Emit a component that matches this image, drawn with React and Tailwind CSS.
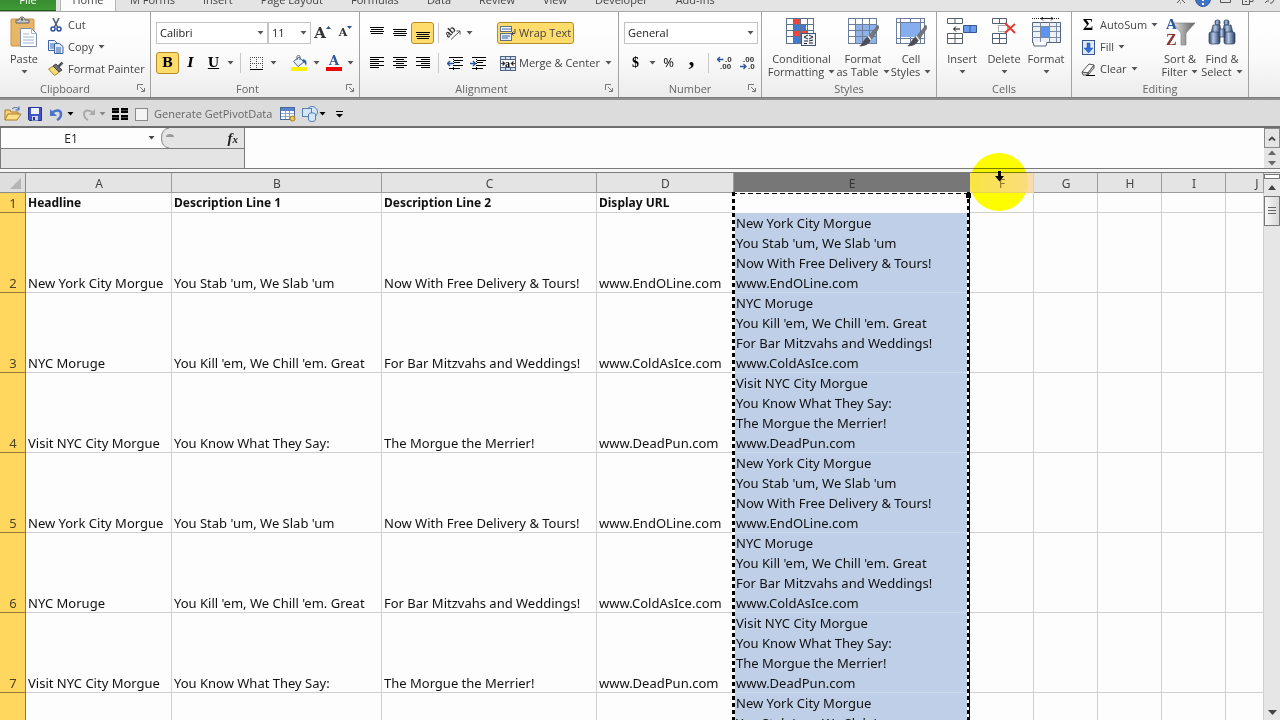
import { useState } from 'react';

const TABS = ['M Forms', 'Insert', 'Page Layout', 'Formulas', 'Data', 'Review', 'View', 'Developer', 'Add-Ins'];

const COLUMNS = [
    { id: 'A', width: 'w-[146px]' },
    { id: 'B', width: 'w-[210px]' },
    { id: 'C', width: 'w-[215px]' },
    { id: 'D', width: 'w-[137px]' },
    { id: 'E', width: 'w-[236px]' },
    { id: 'F', width: 'w-16' },
    { id: 'G', width: 'w-16' },
    { id: 'H', width: 'w-16' },
    { id: 'I', width: 'w-16' },
    { id: 'J', width: '' },
];

const ADS = [
    ['New York City Morgue', "You Stab 'um, We Slab 'um", 'Now With Free Delivery & Tours!', 'www.EndOLine.com'],
    ['NYC Moruge', "You Kill 'em, We Chill 'em. Great", 'For Bar Mitzvahs and Weddings!', 'www.ColdAsIce.com'],
    ['Visit NYC City Morgue', 'You Know What They Say:', 'The Morgue the Merrier!', 'www.DeadPun.com'],
];

const ROWS = [0, 1, 2, 0, 1, 2, 0].map((i) => ADS[i]);

/* ---------- small pieces ---------- */

function Arrow({ className = 'text-[#555]' }) {
    return (
        <svg width="7" height="4" viewBox="0 0 7 4" className={`shrink-0 ${className}`}>
            <path d="M0.5 0h6L3.5 3.5z" fill="currentColor" />
        </svg>
    );
}

function Divider() {
    return <div className="h-5 w-px bg-[#c9c9c9]" />;
}

function Launcher() {
    return (
        <button aria-label="More options" className="absolute right-1 bottom-1">
            <svg width="9" height="9" viewBox="0 0 9 9" fill="none" stroke="#777">
                <path d="M0.5 6V0.5H6M3 3l4 4M7.5 4v3.5H4" />
            </svg>
        </button>
    );
}

function Group({ title, className = '', launcher, children }) {
    return (
        <section className={`relative flex shrink-0 flex-col border-r border-[#a3a3a3] ${className}`}>
            <div className="h-[69px]">{children}</div>
            <h2 className="text-center text-[11px] leading-4 text-[#666]">{title}</h2>
            {launcher && <Launcher />}
        </section>
    );
}

function IconButton({ label, className = 'w-[23px]', active, children }) {
    return (
        <button
            aria-label={label}
            className={`flex h-[22px] shrink-0 items-center justify-center rounded-[3px] ${className} ${active ? 'border border-[#b58c2c] bg-[#ffdc6b]' : ''}`}
        >
            {children}
        </button>
    );
}

function SmallButton({ icon, label, arrow }) {
    return (
        <button className="flex h-[22px] items-center gap-1 whitespace-nowrap">
            <span className="flex w-4 justify-center">{icon}</span>
            <span>{label}</span>
            {arrow && <Arrow />}
        </button>
    );
}

function BigButton({ icon, lines, className }) {
    return (
        <button className={`flex shrink-0 flex-col items-center pt-1 leading-[13px] whitespace-nowrap ${className}`}>
            <span className="flex h-9 items-center pb-1">{icon}</span>
            <span>{lines[0]}</span>
            {lines[1] ? (
                <span className="flex items-center gap-1">
                    {lines[1]}
                    <Arrow />
                </span>
            ) : (
                <span className="flex h-[13px] items-center">
                    <Arrow />
                </span>
            )}
        </button>
    );
}

function Combo({ label, value, className }) {
    return (
        <div className={`relative shrink-0 ${className}`}>
            <select
                aria-label={label}
                defaultValue={value}
                className="h-[22px] w-full appearance-none border border-[#c4c4c4] bg-white px-[3px] text-[11px] text-[#222]"
            >
                <option>{value}</option>
            </select>
            <Arrow className="pointer-events-none absolute top-[9px] right-1 text-[#555]" />
        </div>
    );
}

/* ---------- ribbon icons ---------- */

const PasteIcon = () => (
    <svg width="28" height="32" viewBox="0 0 28 32">
        <rect x="1" y="3" width="23" height="27" rx="1" fill="#e9b566" stroke="#c8924a" />
        <path d="M6 7V4h3c0-4 6-4 6 0h4v3z" fill="#c5c8cc" stroke="#666" />
        <circle cx="12" cy="3.5" r="1.2" fill="#555" />
        <path d="M10.500 12.500h11l5 5v13h-16z" fill="#fff" stroke="#7c8ea8" />
        <path d="M21.500 12.500v5h5M13 18h6M13 21h11M13 24h11M13 27h11" fill="none" stroke="#9fb4d3" />
    </svg>
);

const CutIcon = () => (
    <svg width="12" height="14" viewBox="0 0 12 14" fill="none">
        <path d="M3 0l4.500 9M9 0L4.500 9" stroke="#51606f" strokeWidth="1.600" />
        <circle cx="3" cy="11" r="2" stroke="#28509c" strokeWidth="1.500" />
        <circle cx="9" cy="11" r="2" stroke="#28509c" strokeWidth="1.500" />
    </svg>
);

const CopyIcon = () => (
    <svg width="16" height="14" viewBox="0 0 16 14" stroke="#3b62a4">
        <path d="M0.500 0.500h6l3 3v7h-9z" fill="#eaf2fd" />
        <path d="M2 4h4M2 6h5M2 8h5" />
        <path d="M6.500 3.500h5l3.500 3v7H6.500z" fill="#dce9fa" />
        <path d="M8 8h5M8 10h5M8 12h5" />
    </svg>
);

const PainterIcon = () => (
    <svg width="16" height="14" viewBox="0 0 16 14">
        <path d="M0.500 7l5-3 6 6-5 3.500z" fill="#f3dc74" stroke="#a8862e" />
        <path d="M5 4l3-2 6 6-3 2z" fill="#71717a" stroke="#444" />
        <path d="M10 5l4.500-4.500" stroke="#50565e" strokeWidth="2.500" />
    </svg>
);

const BordersIcon = () => (
    <svg width="13" height="13" viewBox="0 0 13 13" stroke="#444">
        <path d="M0 0.500h13M0 6.500h13M0.500 0v12M6.500 0v12M12.500 0v12" strokeDasharray="1 1" />
        <path d="M0 12.500h13" stroke="#000" />
    </svg>
);

const FillColorIcon = () => (
    <svg width="17" height="16" viewBox="0 0 17 16">
        <path d="M2.500 6.500L8 2l5 5-6 4.500z" fill="#e6edf5" stroke="#52687f" />
        <path d="M6 5V1.500c0-1.500 3-1.500 3 0V5" fill="none" stroke="#52687f" />
        <path d="M12 4c4 1 4 4 3 7-1-3-2-4-4-5z" fill="#2f62ad" />
        <rect y="12" width="16" height="4" fill="#fff200" />
    </svg>
);

function AlignIcon({ rows, top = 0 }) {
    return (
        <svg width="14" height="14" viewBox="0 0 14 14" stroke="#000">
            {rows.map(([x, w], i) => (
                <path key={i} d={`M${x} ${top + i * 2 + 0.5}h${w}`} />
            ))}
        </svg>
    );
}

const THREE = [[0, 14], [1, 12], [0, 14], [1, 12]];
const LEFT = [[0, 14], [0, 9], [0, 14], [0, 9], [0, 14], [0, 9]];
const CENTER = [[0, 14], [3, 8], [0, 14], [3, 8], [0, 14], [3, 8]];
const RIGHT = [[0, 14], [5, 9], [0, 14], [5, 9], [0, 14], [5, 9]];

const OrientationIcon = () => (
    <svg width="16" height="14" viewBox="0 0 16 14">
        <text x="0" y="9" fontSize="10" fontWeight="bold" fontFamily="Liberation Sans, sans-serif" fill="#333" transform="rotate(-45 5 8)">ab</text>
        <path d="M5 13.500l9-8.500M10.500 5H14v3.500" fill="none" stroke="#555" />
    </svg>
);

function IndentIcon({ out }) {
    return (
        <svg width="16" height="13" viewBox="0 0 16 13" fill="none" stroke="#000">
            <path d="M2 0.500h14M7 3.500h9M7 5.500h6M7 8.500h9M2 11.500h11" />
            <path d="M6.500 0v13" strokeDasharray="1 1" />
            <path d={out ? 'M6 6.500H1M3 4L0.500 6.500L3 9' : 'M0 6.500h5M3 4l2.500 2.500L3 9'} stroke="#2c56a0" strokeWidth="1.300" />
        </svg>
    );
}

const WrapIcon = () => (
    <svg width="16" height="15" viewBox="0 0 16 15" fill="none">
        <rect x="0.500" y="0.500" width="11" height="5" fill="#fff" stroke="#5f6f86" />
        <rect x="0.500" y="7.500" width="11" height="7" fill="#e4edf9" stroke="#5f6f86" />
        <path d="M2 3h10M2 10h8M2 12h6" stroke="#3f62a5" />
        <path d="M15 3v4.500h-3M13.500 5.500l-2 2 2 2" stroke="#444" />
    </svg>
);

const MergeIcon = () => (
    <svg width="16" height="15" viewBox="0 0 16 15">
        <rect x="0.500" y="0.500" width="15" height="14" fill="#cfdff5" stroke="#4f6381" />
        <path d="M5.500 0v4M10.500 0v4M5.500 11v4M10.500 11v4M0 3.500h16M0 11.500h16" stroke="#4f6381" />
        <rect x="1" y="4" width="14" height="7" fill="#fff" />
        <path d="M1 7.500h4M11 7.500h4M3 5.500v4L5 7.500zM13 5.500v4L11 7.500z" stroke="#333" strokeWidth="0.800" />
        <text x="5" y="10.500" fontSize="10" fontWeight="bold" fontFamily="Liberation Serif, serif" fill="#000">a</text>
    </svg>
);

function DecimalIcon({ more }) {
    return (
        <svg width="17" height="14" viewBox="0 0 17 14" fontFamily="Liberation Sans, sans-serif" fontSize="8" fontWeight="bold" fill="#333">
            <text x={more ? 8 : 3} y="6">{more ? '.0' : '.00'}</text>
            <text x={more ? 3 : 8} y="13">{more ? '.00' : '.0'}</text>
            <path d={more ? 'M6.500 3.500H1M3 1L0.500 3.500L3 6' : 'M0 10.500h5.500M3.500 8L6 10.500 3.500 13'} fill="none" stroke="#2c56a0" strokeWidth="1.300" />
        </svg>
    );
}

const Brush = () => (
    <g>
        <path d="M30 7L20 19l3 3L31 10z" fill="#777" stroke="#555" strokeWidth="0.500" />
        <path d="M20 18l-3 3c-2 2-3 6-6 7 5 1 9-1 12-6z" fill="#4c4c55" />
        <path d="M20 18l3 4" stroke="#ddd" strokeWidth="1.500" />
    </g>
);

const ConditionalIcon = () => (
    <svg width="31" height="29" viewBox="0 0 31 29">
        <path d="M0.500 0.500h28v25h-28z" fill="#fff" />
        <path d="M8 0h6v7H8z" fill="#e8483f" />
        <path d="M8 7h12v6H8z" fill="#3f7bd0" />
        <path d="M8 13h14v6H8z" fill="#e8483f" />
        <path d="M8 19h7v6H8z" fill="#3f7bd0" />
        <path d="M0 0.500h28M0 6.500h28M0 12.500h28M0 18.500h28M0 25.500h28M0.500 0v26M7.500 0v26M14.500 0v26M21.500 0v26M27.500 0v26" stroke="#5d7290" />
        <rect x="15.500" y="15.500" width="14" height="12" fill="#eef3fb" stroke="#44546d" />
        <path d="M22 17l-4 2 4 2M18 23h4M23 17l4 2-4 2M23 23l4-1M23 25h4M18 25.500h3" fill="none" stroke="#222" />
    </svg>
);

const FormatTableIcon = () => (
    <svg width="31" height="29" viewBox="0 0 31 29">
        <path d="M0.500 0.500h28v25h-28z" fill="#fff" />
        <path d="M7 7h22v19H7z" fill="#8fb2ea" />
        <path d="M0 0.500h29M0 6.500h29M0 12.500h29M0 18.500h29M0 25.500h29M0.500 0v26M7.500 0v26M14.500 0v26M21.500 0v26M28.500 0v26" stroke="#6b7f9c" />
        <Brush />
    </svg>
);

const CellStylesIcon = () => (
    <svg width="31" height="29" viewBox="0 0 31 29">
        <path d="M0.500 0.500h28v25h-28z" fill="#fff" />
        <path d="M0 0.500h29M0 4.500h29M0 20.500h29M0 25.500h29M0.500 0v26M4.500 0v26M14.500 0v26M24.500 0v26M28.500 0v26" stroke="#6b7f9c" />
        <path d="M5 5h19v14H5z" fill="#86adee" />
        <Brush />
    </svg>
);

const InsertIcon = () => (
    <svg width="31" height="28" viewBox="0 0 31 28" fill="#fff" stroke="#555f6e">
        <path d="M0.500 0.500h15v5h-15zM8 0v6" />
        <path d="M0.500 15.500h15v10h-15zM8 15v11M0 20.500h16" />
        <path d="M16.500 7.500h13v7h-13z" fill="#6a9bec" stroke="#37568f" />
        <path d="M23 7v8" stroke="#37568f" />
        <path d="M13 11H7M9 8.500L6.500 11L9 13.500" fill="none" stroke="#000" />
    </svg>
);

const DeleteIcon = () => (
    <svg width="25" height="28" viewBox="0 0 25 28" fill="#fff" stroke="#555f6e">
        <path d="M0.500 0.500h14v5h-14zM7.500 0v6" />
        <path d="M0.500 15.500h14v10h-14zM7.500 15v11M0 20.500h15" />
        <path d="M6.500 7.500h9v6h-9z" strokeDasharray="1 1" />
        <path d="M13 5l10 10M23 6L13 15" stroke="#e5352c" strokeWidth="1.800" />
    </svg>
);

const FormatIcon = () => (
    <svg width="31" height="30" viewBox="0 0 31 30" fill="#fff" stroke="#55647c">
        <path d="M1 1.500h28" stroke="#222" strokeDasharray="1 1" />
        <path d="M10 1.500h12M12 0l-2 1.500 2 2M20 0l2 1.500-2 2" fill="none" stroke="#222" />
        <path d="M1.500 5.500h28v20h-28z" fill="#edf1f7" />
        <path d="M10 10h8v11h-8z" fill="#5c94ef" stroke="none" />
        <path d="M1 9.500h28M1 14.500h8M19 14.500h10M1 20.500h28M9.500 5v20M18.500 5v20M25.500 5v20" fill="none" stroke="#7b8ba4" />
        <path d="M2 25l1 4h12l1-4" />
    </svg>
);

const FillDownIcon = () => (
    <svg width="13" height="15" viewBox="0 0 13 15">
        <rect x="0.500" y="0.500" width="12" height="14" fill="#dfeafb" stroke="#3a5690" />
        <path d="M5 3h3v5h3l-4.500 5L2 8h3z" fill="#2f6fdc" stroke="#234f9f" strokeWidth="0.500" />
    </svg>
);

const EraserIcon = () => (
    <svg width="15" height="13" viewBox="0 0 15 13" stroke="#555">
        <path d="M1 9l7-8 5 1-6 8z" fill="#fff" />
        <path d="M1 9l6 1v2H2zM7 10l6-8v3l-6 7z" fill="#ddd" />
        <path d="M5 12.500h9" stroke="#000" />
    </svg>
);

const SortIcon = () => (
    <svg width="30" height="30" viewBox="0 0 30 30" fontFamily="Liberation Serif, serif" fontWeight="bold">
        <defs>
            <linearGradient id="funnel">
                <stop offset="0" stopColor="#e3e3e3" />
                <stop offset="1" stopColor="#5f5f5f" />
            </linearGradient>
        </defs>
        <path d="M8 6h22l-9 10v12h-5V16z" fill="url(#funnel)" stroke="#777" strokeWidth="0.600" />
        <text x="1" y="12" fontSize="15" fill="#2b579c">A</text>
        <text x="1" y="28" fontSize="16" fill="#8a3730">Z</text>
    </svg>
);

const FindIcon = () => (
    <svg width="28" height="28" viewBox="0 0 28 28">
        <defs>
            <linearGradient id="lens">
                <stop offset="0" stopColor="#32486c" />
                <stop offset="0.400" stopColor="#b5c7e4" />
                <stop offset="1" stopColor="#273c60" />
            </linearGradient>
        </defs>
        <g fill="url(#lens)" stroke="#2a3f63" strokeWidth="0.700">
            <rect x="7" y="2" width="5" height="5" rx="2" />
            <rect x="16" y="2" width="5" height="5" rx="2" />
            <path d="M5 7h7l1 8H3z" />
            <path d="M16 7h7l2 8H15z" />
            <rect x="1" y="14" width="11" height="12" rx="2" />
            <rect x="16" y="14" width="11" height="12" rx="2" />
            <rect x="11" y="11" width="6" height="8" />
        </g>
    </svg>
);

/* ---------- ribbon ---------- */

function TabStrip() {
    return (
        <nav className="flex h-3 items-end overflow-hidden border-b border-[#a9a9a9] bg-[#e4e4e4]">
            <button className="h-6 w-14 shrink-0 border-b border-[#1d5a1b] bg-gradient-to-b from-[#2c7a27] to-[#3f9a35] pt-[2px] leading-4 text-white">File</button>
            <button className="ml-1 h-6 w-14 shrink-0 border-x border-[#b4b4b4] bg-[#fcfcfc] pt-[2px] leading-4">Home</button>
            {TABS.map((tab) => (
                <button key={tab} className="h-6 shrink-0 px-[14px] pt-[2px] leading-4">
                    {tab}
                </button>
            ))}
            <svg width="104" height="11" viewBox="0 0 104 11" className="ml-auto shrink-0 self-start" fill="none" stroke="#555">
                <path d="M1 3l3-3M4 3h1M6 0l3 3" />
                <circle cx="27" cy="-1" r="7.500" fill="#3f73c4" stroke="#305b9f" />
                <path d="M27 0v1M27 3v2" stroke="#fff" strokeWidth="2" />
                <path d="M44.500 0v2.500h10V0M66.500 0v4.500h7V0M74 1.500h3V0M69 1.500h2M89 3l2-2h2M94 3h2l2-3" />
            </svg>
        </nav>
    );
}

function Ribbon() {
    return (
        <div className="flex overflow-hidden bg-gradient-to-b from-white via-[#fbfbfb] to-[#ececec]">
            <Group title="Clipboard" className="w-[151px] pr-5" launcher>
                <div className="flex">
                    <BigButton icon={<PasteIcon />} lines={['Paste']} className="w-12" />
                    <div className="pt-[2px]">
                        <SmallButton icon={<CutIcon />} label="Cut" />
                        <SmallButton icon={<CopyIcon />} label="Copy" arrow />
                        <SmallButton icon={<PainterIcon />} label="Format Painter" />
                    </div>
                </div>
            </Group>

            <Group title="Font" className="w-[209px] pr-5 pl-[5px]" launcher>
                <div className="flex pt-[10px]">
                    <Combo label="Font" value="Calibri" className="w-28" />
                    <Combo label="Font size" value="11" className="w-[43px]" />
                    <IconButton label="Increase font size">
                        <b className="font-[family-name:'DejaVu_Serif',serif] text-[15px] leading-4 text-[#333]">A</b>
                        <svg width="5" height="3" viewBox="0 0 5 3" className="mb-3 shrink-0"><path d="M0 3h5L2.500 0z" fill="#2c4f8f" /></svg>
                    </IconButton>
                    <IconButton label="Decrease font size">
                        <b className="font-[family-name:'DejaVu_Serif',serif] text-[11px] leading-4 text-[#333]">A</b>
                        <svg width="5" height="3" viewBox="0 0 5 3" className="mb-3 shrink-0"><path d="M0 0h5L2.500 3z" fill="#2c4f8f" /></svg>
                    </IconButton>
                </div>
                <div className="mt-2 flex items-center font-[family-name:'DejaVu_Serif',serif] text-[13px] text-black">
                    <IconButton label="Bold" active><b>B</b></IconButton>
                    <IconButton label="Italic"><b className="italic">I</b></IconButton>
                    <IconButton label="Underline"><b className="underline">U</b></IconButton>
                    <IconButton label="Underline style" className="w-[10px]"><Arrow /></IconButton>
                    <div className="px-[5px]"><Divider /></div>
                    <IconButton label="Borders" className="ml-1"><BordersIcon /></IconButton>
                    <IconButton label="Border style" className="w-5"><Arrow /></IconButton>
                    <Divider />
                    <IconButton label="Fill color" className="ml-2"><FillColorIcon /></IconButton>
                    <IconButton label="Fill colors" className="w-4"><Arrow /></IconButton>
                    <IconButton label="Font color" className="w-5">
                        <span className="flex w-4 justify-center border-b-4 border-[#f00000] leading-3 font-bold text-[#2f5597]">A</span>
                    </IconButton>
                    <IconButton label="Font colors" className="w-3"><Arrow /></IconButton>
                </div>
            </Group>

            <Group title="Alignment" className="w-[259px] pr-5 pl-[5px]" launcher>
                <div className="flex pt-[10px]">
                    <div>
                        <div className="flex items-center">
                            <IconButton label="Top align"><AlignIcon rows={THREE} top={1} /></IconButton>
                            <IconButton label="Middle align"><AlignIcon rows={THREE} top={3} /></IconButton>
                            <IconButton label="Bottom align" active><AlignIcon rows={THREE} top={6} /></IconButton>
                            <div className="px-1"><Divider /></div>
                            <IconButton label="Orientation" className="w-8"><OrientationIcon /><Arrow className="ml-1 text-[#555]" /></IconButton>
                        </div>
                        <div className="mt-2 flex items-center">
                            <IconButton label="Align left"><AlignIcon rows={LEFT} top={1} /></IconButton>
                            <IconButton label="Center"><AlignIcon rows={CENTER} top={1} /></IconButton>
                            <IconButton label="Align right"><AlignIcon rows={RIGHT} top={1} /></IconButton>
                            <div className="px-1"><Divider /></div>
                            <IconButton label="Decrease indent"><IndentIcon out /></IconButton>
                            <IconButton label="Increase indent"><IndentIcon /></IconButton>
                        </div>
                    </div>
                    <div className="mr-1 ml-1 w-px bg-[#c9c9c9]" />
                    <div>
                        <button className="flex h-[22px] items-center gap-[3px] rounded-[3px] border border-[#b58c2c] bg-[#ffdc6b] px-[2px] whitespace-nowrap">
                            <WrapIcon />
                            Wrap Text
                        </button>
                        <button className="mt-2 ml-[3px] flex h-[22px] items-center gap-[3px] whitespace-nowrap">
                            <MergeIcon />
                            Merge &amp; Center
                            <Arrow className="ml-[2px] text-[#555]" />
                        </button>
                    </div>
                </div>
            </Group>

            <Group title="Number" className="w-[143px] px-[5px]" launcher>
                <div className="pt-[10px]">
                    <Combo label="Number format" value="General" className="w-[134px]" />
                </div>
                <div className="mt-2 flex items-center">
                    <IconButton label="Accounting format"><b className="font-[family-name:'Liberation_Serif',serif] text-sm text-black">$</b></IconButton>
                    <IconButton label="Accounting formats" className="w-[10px]"><Arrow /></IconButton>
                    <IconButton label="Percent style"><span className="text-[13px] text-black">%</span></IconButton>
                    <IconButton label="Comma style"><b className="pb-3 font-[family-name:'Liberation_Serif',serif] text-2xl leading-3 text-black">,</b></IconButton>
                    <div className="px-[5px]"><Divider /></div>
                    <IconButton label="Increase decimal"><DecimalIcon more /></IconButton>
                    <IconButton label="Decrease decimal"><DecimalIcon /></IconButton>
                </div>
            </Group>

            <Group title="Styles" className="w-[175px]">
                <div className="flex pl-[6px]">
                    <BigButton icon={<ConditionalIcon />} lines={['Conditional', 'Formatting']} className="w-[67px]" />
                    <BigButton icon={<FormatTableIcon />} lines={['Format', 'as Table']} className="w-14" />
                    <BigButton icon={<CellStylesIcon />} lines={['Cell', 'Styles']} className="w-10" />
                </div>
            </Group>

            <Group title="Cells" className="w-[135px]">
                <div className="flex pl-1">
                    <BigButton icon={<InsertIcon />} lines={['Insert']} className="w-[42px]" />
                    <BigButton icon={<DeleteIcon />} lines={['Delete']} className="w-[42px]" />
                    <BigButton icon={<FormatIcon />} lines={['Format']} className="w-[42px]" />
                </div>
            </Group>

            <Group title="Editing" className="w-[177px]">
                <div className="flex pl-2">
                    <div className="w-[79px] pt-[2px]">
                        <SmallButton icon={<b className="font-[family-name:'Liberation_Serif',serif] text-base leading-4 text-black">Σ</b>} label="AutoSum" arrow />
                        <SmallButton icon={<FillDownIcon />} label="Fill" arrow />
                        <SmallButton icon={<EraserIcon />} label="Clear" arrow />
                    </div>
                    <BigButton icon={<SortIcon />} lines={['Sort &', 'Filter']} className="w-[42px]" />
                    <BigButton icon={<FindIcon />} lines={['Find &', 'Select']} className="w-[42px]" />
                </div>
            </Group>
        </div>
    );
}

function QuickAccess() {
    const [pivot, setPivot] = useState(false);

    return (
        <div className="flex h-[30px] items-center border-t-2 border-b-2 border-t-[#909090] border-b-[#6e6e6e] bg-[#dcdcdc] px-1 pt-[2px]">
            <button aria-label="Open" className="w-[22px]">
                <svg width="18" height="16" viewBox="0 0 18 16">
                    <path d="M1 14V4h5l1 2h7v3" fill="#f5d27a" stroke="#a77a24" />
                    <path d="M1 14l3-6h13l-4 6z" fill="#ffe08a" stroke="#a77a24" />
                    <path d="M8 3c2-2 5-2 7 0M15 0.500V4h-3.500" fill="none" stroke="#3a62a8" />
                </svg>
            </button>
            <button aria-label="Save" className="ml-[2px] w-[22px]">
                <svg width="14" height="14" viewBox="0 0 14 14">
                    <path d="M0.500 0.500h13v13h-12l-1-1z" fill="#4254c6" stroke="#27348d" />
                    <rect x="3" y="1" width="8" height="6" fill="#eef2fb" />
                    <rect x="4" y="9" width="6" height="4.500" fill="#cfd6e6" />
                    <rect x="5" y="10" width="2" height="3" fill="#27348d" />
                </svg>
            </button>
            <button aria-label="Undo" className="flex w-7 items-center gap-1">
                <svg width="13" height="13" viewBox="0 0 13 13" fill="none">
                    <path d="M2 5c4-4 9-3 9 1 0 3-2 5-4 6" stroke="#4a74c9" strokeWidth="2.500" />
                    <path d="M0 1v7h7z" fill="#4a74c9" />
                </svg>
                <Arrow className="text-black" />
            </button>
            <button aria-label="Redo" className="flex w-[34px] items-center gap-1 pl-1">
                <svg width="13" height="13" viewBox="0 0 13 13" fill="none" className="shrink-0">
                    <path d="M11 5C7 1 2 2 2 6c0 3 2 5 4 6" stroke="#a9a9a9" strokeWidth="2" />
                    <path d="M13 1v6H7z" fill="#a9a9a9" />
                </svg>
                <Arrow className="text-[#888]" />
            </button>
            <button aria-label="Freeze panes" className="mr-[3px] w-5">
                <svg width="16" height="12" viewBox="0 0 16 12">
                    <path d="M0 0h7v5H0zM9 0h7v5H9zM0 7h7v5H0zM9 7h7v5H9z" fill="#000" />
                    <path d="M0 2.500h7M9 2.500h7M0 9.500h7M9 9.500h7" stroke="#777" strokeWidth="0.600" />
                </svg>
            </button>
            <label className="flex items-center gap-[6px] whitespace-nowrap text-[#666]">
                <input
                    type="checkbox"
                    checked={pivot}
                    onChange={() => setPivot(!pivot)}
                    className="h-[13px] w-[13px] appearance-none border border-[#8a8a8a] bg-[#f4f4f4] checked:bg-[#666]"
                />
                Generate GetPivotData
            </label>
            <button aria-label="Table" className="ml-2 w-[22px]">
                <svg width="16" height="15" viewBox="0 0 16 15">
                    <rect x="0.500" y="0.500" width="14" height="12" fill="#fff" stroke="#4a6796" />
                    <path d="M1 1h13v3H1z" fill="#5585cf" />
                    <path d="M1 6.500h13M1 9.500h13M5.500 4v8M9.500 4v8" stroke="#8aa5cf" />
                    <circle cx="12.500" cy="11.500" r="2.500" fill="#f0c95c" stroke="#a17d22" />
                </svg>
            </button>
            <button aria-label="Shapes" className="flex w-[34px] items-center">
                <svg width="17" height="16" viewBox="0 0 17 16" fill="#d5e6f8" stroke="#5580b5">
                    <circle cx="10" cy="6" r="5.500" />
                    <rect x="0.500" y="2.500" width="9" height="8" />
                    <path d="M6.500 8v6c1 2 6 2 7 0V8c-1-1.500-6-1.500-7 0z" />
                </svg>
                <Arrow className="text-black" />
            </button>
            <button aria-label="Customize toolbar">
                <svg width="7" height="7" viewBox="0 0 7 7"><path d="M0 0h7v1H0zM0 3h7L3.500 6.500z" fill="#000" /></svg>
            </button>
        </div>
    );
}

function FormulaBar() {
    return (
        <div className="flex h-[41px] border-b border-[#7b7b7b]">
            <div className="w-[245px] shrink-0 border-x border-[#7b7b7b] bg-[#e4e4e4]">
                <div className="flex h-[21px] items-center border-b border-[#7b7b7b]">
                    <input
                        aria-label="Name box"
                        defaultValue="E1"
                        className="h-5 w-[140px] bg-[#fdfdfd] text-center text-[12px] text-[#222]"
                    />
                    <span className="flex h-5 w-5 items-center justify-center bg-[#fdfdfd]"><Arrow className="text-[#444]" /></span>
                    <svg width="16" height="20" viewBox="0 0 16 20" className="shrink-0">
                        <path d="M0 0h8Q0 1 0 10t8 10H0z" fill="#fdfdfd" />
                        <path d="M8 0Q0.500 1 0.500 10T8 20" fill="none" stroke="#8a8a8a" />
                        <path d="M5 9c0-4 8-4 8 0z" fill="#9a9a9a" />
                    </svg>
                    <button aria-label="Insert function" className="ml-auto pr-[6px] font-[family-name:'Liberation_Serif',serif] text-[15px] leading-5 font-bold text-[#222] italic">
                        f<span className="text-[11px]">x</span>
                    </button>
                </div>
            </div>
            <input aria-label="Formula" className="min-w-0 flex-1 bg-[#fdfdfd] px-1" />
            <div className="w-4 shrink-0 bg-[#e4e4e4]">
                <button aria-label="Expand formula bar" className="flex h-5 w-full items-center justify-center border border-[#8a8a8a]">
                    <svg width="8" height="5" viewBox="0 0 8 5"><path d="M1 4.500l3-3 3 3" fill="none" stroke="#444" strokeWidth="1.800" /></svg>
                </button>
                <svg width="16" height="18" viewBox="0 0 16 18">
                    <path d="M4 7h8L8 2.500zM4 13h8l-4 4.500z" fill="#666" />
                </svg>
            </div>
        </div>
    );
}

/* ---------- sheet ---------- */

function MarchingAnts() {
    return (
        <svg className="pointer-events-none absolute -top-px -left-[2px] z-10 h-[2000px] w-[239px]">
            <path d="M0 1H239" stroke="#fff" strokeWidth="2" />
            <path d="M0 1.500H239" stroke="#000" strokeDasharray="5 3" />
            <path d="M1.500 0V2000M236.500 0V2000" stroke="#fff" strokeWidth="3" />
            <path d="M1.500 0V2000M236.500 0V2000" stroke="#000" strokeWidth="3" strokeDasharray="4 3" />
            <path d="M237.500 0V2000" stroke="#000" />
            <rect x="234" y="1" width="5" height="5" fill="#000" />
        </svg>
    );
}

function Pointer() {
    return (
        <>
            <div className="pointer-events-none absolute -top-5 left-0 z-10 h-[58px] w-[58px] rounded-full bg-[#ffff00] mix-blend-multiply" />
            <div className="absolute inset-0 z-10 bg-gradient-to-r from-[#ffe64d] to-[#ffd9a0] opacity-80" />
            <svg width="9" height="11" viewBox="0 0 9 11" className="absolute -top-[2px] left-[25px] z-20">
                <path d="M3 0h3v5h3L4.500 10.500 0 5h3z" fill="#000" />
            </svg>
        </>
    );
}

function Sheet() {
    const cell = 'whitespace-nowrap px-[2px] py-0 align-bottom leading-5 shadow-[inset_-1px_-1px_0_#d0d0d0]';
    const rowHead = 'p-0 text-center align-bottom font-normal leading-5 text-[#4d4420] bg-[#ffd75e] shadow-[inset_-1px_-1px_0_#8f7a3c]';

    return (
        <table className="w-full table-fixed border-separate border-spacing-0 bg-[#fdfdfd] font-[family-name:'Noto_Sans',sans-serif] text-[13px] text-[#111]">
            <colgroup>
                <col className="w-[26px]" />
                {COLUMNS.map((c) => (
                    <col key={c.id} className={c.width} />
                ))}
            </colgroup>
            <thead>
                <tr className="h-5 text-[12px] text-[#444]">
                    <th className="bg-[#dedede] p-0 shadow-[inset_-1px_-1px_0_#8c8c8c]">
                        <svg width="20" height="18" viewBox="0 0 20 18" className="ml-1"><path d="M17 4v11H6z" fill="#b5b5b5" /></svg>
                    </th>
                    {COLUMNS.map(({ id }) => (
                        <th
                            key={id}
                            className={`relative px-0 pt-[2px] pb-0 text-center leading-[18px] font-normal ${id === 'E' ? 'bg-[#777] text-[#333]' : 'bg-[#e4e4e4] shadow-[inset_-1px_-1px_0_#9c9c9c]'}`}
                        >
                            {id === 'F' && <Pointer />}
                            <span className={id === 'F' ? 'relative z-10 text-[#8a7430]' : id === 'J' ? 'pl-6' : ''}>{id}</span>
                        </th>
                    ))}
                </tr>
            </thead>
            <tbody>
                <tr className="h-5 text-xs font-bold">
                    <th className={`${rowHead} text-[13px]`}>1</th>
                    <td className={cell}>Headline</td>
                    <td className={cell}>Description Line 1</td>
                    <td className={cell}>Description Line 2</td>
                    <td className={cell}>Display URL</td>
                    <td className="relative p-0">
                        <MarchingAnts />
                    </td>
                    {COLUMNS.slice(5).map((c) => (
                        <td key={c.id} className={cell} />
                    ))}
                </tr>
                {ROWS.map((ad, i) => (
                    <tr key={i} className="h-20">
                        <th className={rowHead}>{i + 2}</th>
                        {ad.map((text) => (
                            <td key={text} className={cell}>{text}</td>
                        ))}
                        <td className="bg-[#bfcfe7] py-0 pr-0 pl-[2px] leading-5 whitespace-nowrap shadow-[inset_0_-1px_0_#cfdbec]">
                            {ad.map((text) => (
                                <div key={text}>{text}</div>
                            ))}
                        </td>
                        {COLUMNS.slice(5).map((c) => (
                            <td key={c.id} className={cell} />
                        ))}
                    </tr>
                ))}
            </tbody>
        </table>
    );
}

function ScrollBar() {
    return (
        <div className="z-20 flex w-4 shrink-0 flex-col items-stretch bg-[#e6e6e6]">
            <div className="mt-px h-[5px] border border-[#777] bg-white" />
            <button aria-label="Scroll up" className="flex h-4 items-center justify-center">
                <svg width="8" height="5" viewBox="0 0 8 5"><path d="M0 5h8L4 0z" fill="#444" /></svg>
            </button>
            <div className="mt-px flex h-[30px] items-center justify-center border border-[#777] bg-gradient-to-r from-[#f8f8f8] to-[#d8d8d8]">
                <svg width="8" height="8" viewBox="0 0 8 8" stroke="#666"><path d="M0 0.500h8M0 3.500h8M0 6.500h8" /></svg>
            </div>
            <button aria-label="Scroll down" className="mt-auto flex h-4 items-center justify-center">
                <svg width="9" height="5" viewBox="0 0 9 5"><path d="M0 0h9L4.500 5z" fill="#444" /></svg>
            </button>
        </div>
    );
}

export default function App() {
    return (
        <div className="flex h-screen flex-col overflow-hidden bg-[#fdfdfd] font-[family-name:'Open_Sans','Noto_Sans',sans-serif] text-[11px] text-[#444]">
            <TabStrip />
            <Ribbon />
            <div className="h-px shrink-0 bg-[#7d7d7d]" />
            <QuickAccess />
            <FormulaBar />
            <div className="h-[3px] shrink-0 bg-[#f4f4f4]" />
            <main className="flex min-h-0 flex-1 border-t border-[#7b7b7b]">
                <div className="min-w-0 flex-1">
                    <Sheet />
                </div>
                <ScrollBar />
            </main>
        </div>
    );
}
